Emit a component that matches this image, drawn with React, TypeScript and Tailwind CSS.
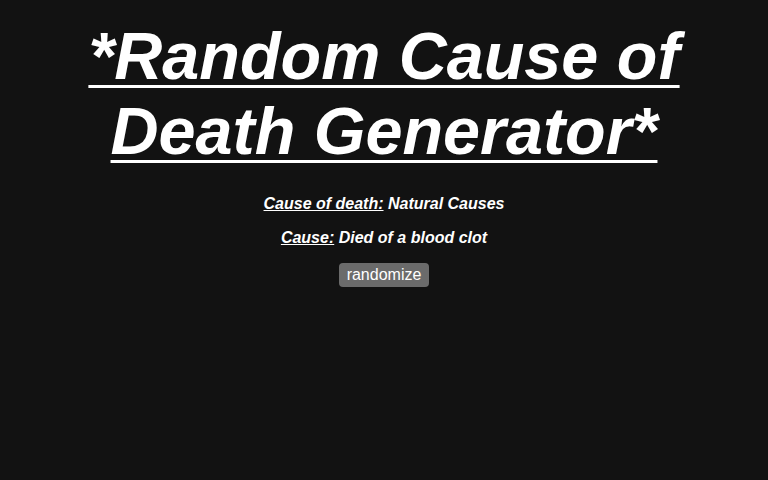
import React, { useState } from 'react';

type Death = {
  category: string;
  cause: string;
};

const deaths: Death[] = [
  { category: 'Natural Causes', cause: 'Died of a blood clot' },
  { category: 'Natural Causes', cause: 'Died of old age' },
  { category: 'Accident', cause: 'Slipped on a banana peel' },
  { category: 'Accident', cause: 'Fell down the stairs' },
];

export default function App() {
  const [death, setDeath] = useState<Death>(deaths[0]);

  const randomize = () => {
    setDeath(deaths[Math.floor(Math.random() * deaths.length)]);
  };

  return (
    <div className="min-h-screen bg-[#121212] text-white text-center font-['Liberation_Sans',Arial,sans-serif]">
      <h1 className="pt-[19px] px-8 text-[66.5px] leading-[75px] font-bold italic underline decoration-[3px] underline-offset-[6px]">
        *Random Cause of Death Generator*
      </h1>
      <p className="mt-[23px] text-base font-bold italic">
        <span className="underline">Cause of death:</span> {death.category}
      </p>
      <p className="mt-[10px] text-base font-bold italic">
        <span className="underline">Cause:</span> {death.cause}
      </p>
      <button
        onClick={randomize}
        className="mt-[13px] px-2 py-0 leading-6 bg-[#6b6b6b] text-white text-base rounded"
      >
        randomize
      </button>
    </div>
  );
}
